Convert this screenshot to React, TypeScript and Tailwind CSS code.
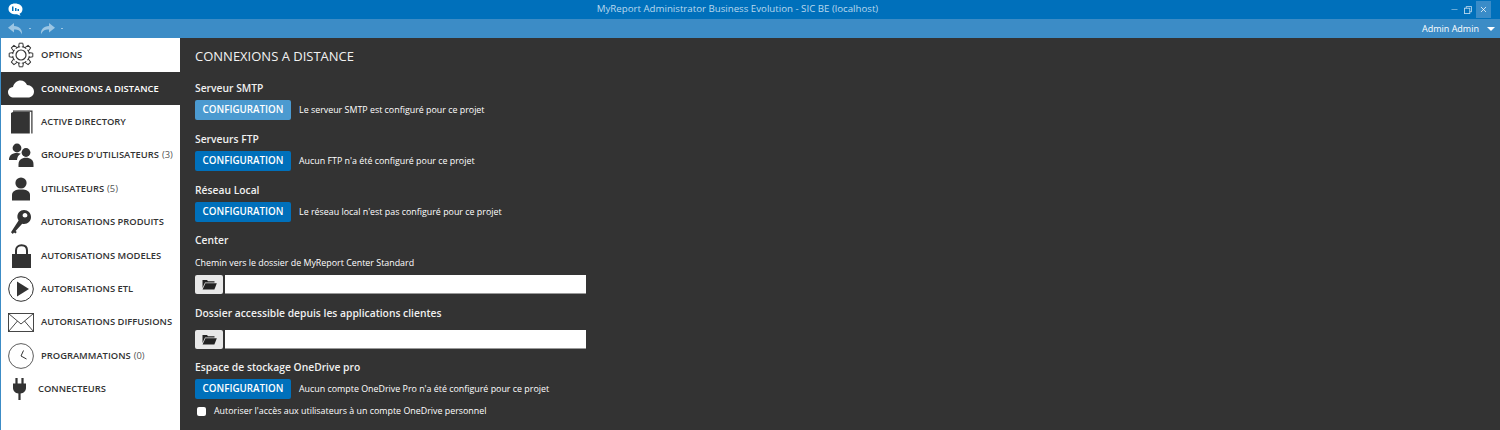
import { ReactNode } from 'react';
import { Minus, X } from 'lucide-react';

const font = "font-['Open_Sans','Noto_Sans',sans-serif]";

function GearIcon() {
  const teeth = [0, 45, 90, 135, 180, 225, 270, 315];
  return (
    <svg viewBox="0 0 26 26" className="w-[26px] h-[26px]" fill="none" stroke="#333" strokeWidth="1">
      {teeth.map((a) => (
        <path key={a} transform={`rotate(${a} 13 13)`} d="M10.6 5 L11.2 1.2 H14.8 L15.4 5" strokeLinejoin="round" />
      ))}
      {teeth.map((a) => (
        <path key={a} transform={`rotate(${a + 22.5} 13 13)`} d="M10.6 5 Q13 4.2 15.4 5" />
      ))}
      <circle cx="13" cy="13" r="5" strokeWidth="1.2" />
    </svg>
  );
}

function CloudIcon() {
  return (
    <svg viewBox="0 0 26 18" className="w-[26px] h-[18px]" fill="#fff">
      <path d="M6 17.5 C2.5 17.5 0 15.2 0 12.2 C0 9.4 2.2 7.2 5 7 C6 3 9 .5 12.5 .5 C15.5 .5 18 2.3 19 5 C23 5.2 26 8 26 11.5 C26 15 23.5 17.5 20 17.5 Z" />
    </svg>
  );
}

function BookIcon() {
  return (
    <svg viewBox="0 0 23 24" className="w-[23px] h-[24px]">
      <path d="M3 0.5 H22.5 V23.5 H21.3 V1.7 H3 Z" fill="#333" />
      <path d="M1 3 L3 2 H19.8 V23.5 H1 Z" fill="#333" />
    </svg>
  );
}

function GroupIcon() {
  return (
    <svg viewBox="0 0 25 24" className="w-[25px] h-[24px]" fill="#333">
      <circle cx="8" cy="5" r="4.4" />
      <path d="M0 17 C0 12.5 3 10 8 10 C9.5 10 10.8 10.3 11.8 10.8 C9 12.5 8.2 14.5 8 17 Z" />
      <circle cx="17" cy="9.5" r="4.4" />
      <path d="M9.5 24 V21.5 C9.5 17 12.5 14.8 17 14.8 C21.5 14.8 24.5 17 24.5 21.5 V24 Z" />
    </svg>
  );
}

function UserIcon() {
  return (
    <svg viewBox="0 0 18 24" className="w-[18px] h-[24px]" fill="#333">
      <circle cx="9" cy="6" r="5.6" />
      <path d="M0 23.5 V18 C0 14.5 3 12.5 9 12.5 C15 12.5 18 14.5 18 18 V23.5 Z" />
    </svg>
  );
}

function KeyIcon() {
  return (
    <svg viewBox="0 0 20 24" className="w-[20px] h-[24px]" fill="#333">
      <path fillRule="evenodd" d="M13 0 C17 0 20 3 20 7 C20 11 17 14 13 14 C12.4 14 11.8 13.9 11.2 13.7 L4.6 21 L5.8 22 L4.4 23.6 L3 22.4 L1.8 24 L0 22.3 L7.6 10.4 C7 9.4 6.4 8.2 6.4 7 C6.4 3 9 0 13 0 Z M14 3 C12.6 3 11.6 4 11.6 5.3 C11.6 6.6 12.6 7.6 14 7.6 C15.4 7.6 16.4 6.6 16.4 5.3 C16.4 4 15.4 3 14 3 Z" />
    </svg>
  );
}

function LockIcon() {
  return (
    <svg viewBox="0 0 19 24" className="w-[19px] h-[24px]">
      <path d="M4 11 V6.5 C4 3.2 6.2 1.2 9.5 1.2 C12.8 1.2 15 3.2 15 6.5 V11" fill="none" stroke="#333" strokeWidth="2" />
      <rect x="0" y="10" width="19" height="14" fill="#333" />
    </svg>
  );
}

function PlayIcon() {
  return (
    <svg viewBox="0 0 26 26" className="w-[26px] h-[26px]">
      <circle cx="13" cy="13" r="12.3" fill="none" stroke="#333" strokeWidth="1" />
      <path d="M9 5.5 L21 13 L9 20.5 Z" fill="#333" />
    </svg>
  );
}

function MailIcon() {
  return (
    <svg viewBox="0 0 26 19" className="w-[26px] h-[19px]" fill="none" stroke="#333" strokeWidth="0.9">
      <rect x="0.5" y="0.5" width="25" height="18" />
      <path d="M0.5 0.5 L13 11 L25.5 0.5 M0.5 18.5 L9.5 8 M25.5 18.5 L16.5 8" />
    </svg>
  );
}

function ClockIcon() {
  return (
    <svg viewBox="0 0 26 26" className="w-[26px] h-[26px]" fill="none" stroke="#333">
      <circle cx="13" cy="13" r="12.4" strokeWidth="0.8" />
      <path d="M15.5 7.5 L13 13 L18.5 16" strokeWidth="1" />
    </svg>
  );
}

function PlugIcon() {
  return (
    <svg viewBox="0 0 13 22" className="w-[13px] h-[22px]" fill="#333">
      <rect x="2.4" y="0" width="2.2" height="6" />
      <rect x="8.4" y="0" width="2.2" height="6" />
      <path d="M0 5.5 H13 V10 C13 13 10.5 15.2 7.6 15.6 V22 H5.4 V15.6 C2.5 15.2 0 13 0 10 Z" />
    </svg>
  );
}

function FolderIcon() {
  return (
    <svg viewBox="0 0 15 11" className="w-[15px] h-[11px]" fill="#222">
      <path d="M0.5 1 H5 L6 2.2 H12.5 V3.5 H3 L0.5 9 Z" />
      <path d="M3.4 4.3 H14.8 L12.4 10.6 H0.6 Z" />
    </svg>
  );
}

type NavItem = { icon: ReactNode; label: string; count?: string; active?: boolean };

const navItems: NavItem[] = [
  { icon: <GearIcon />, label: 'OPTIONS' },
  { icon: <CloudIcon />, label: 'CONNEXIONS A DISTANCE', active: true },
  { icon: <BookIcon />, label: 'ACTIVE DIRECTORY' },
  { icon: <GroupIcon />, label: "GROUPES D'UTILISATEURS", count: '(3)' },
  { icon: <UserIcon />, label: 'UTILISATEURS', count: '(5)' },
  { icon: <KeyIcon />, label: 'AUTORISATIONS PRODUITS' },
  { icon: <LockIcon />, label: 'AUTORISATIONS MODELES' },
  { icon: <PlayIcon />, label: 'AUTORISATIONS ETL' },
  { icon: <MailIcon />, label: 'AUTORISATIONS DIFFUSIONS' },
  { icon: <ClockIcon />, label: 'PROGRAMMATIONS', count: '(0)' },
];

function SidebarRow({ item }: { item: NavItem }) {
  return (
    <div
      className={`flex items-center h-[33.4px] ${item.active ? 'bg-[#333333] text-white' : 'text-[#333333]'}`}
    >
      <div className="w-[40px] flex items-center justify-center shrink-0">{item.icon}</div>
      <span className="text-[9.4px] font-semibold whitespace-nowrap">{item.label}</span>
      {item.count && <span className="text-[9.4px] ml-[3px] text-[#555]">{item.count}</span>}
    </div>
  );
}

function ConfigRow({ text, light }: { text: string; light?: boolean }) {
  return (
    <div className="flex items-center gap-2">
      <div
        className={`w-[96px] h-[20px] rounded-[2px] flex items-center justify-center text-[9.8px] font-semibold text-white ${light ? 'bg-[#4b9ad0]' : 'bg-[#0070bb]'}`}
      >
        CONFIGURATION
      </div>
      <span className="text-[8.9px] text-white">{text}</span>
    </div>
  );
}

function Heading({ children }: { children: ReactNode }) {
  return <div className="text-[10.3px] font-semibold text-[#f0f0f0] leading-[14px]">{children}</div>;
}

function PathField() {
  return (
    <div className="flex gap-[2px] w-[391px] h-[19px]">
      <div className="w-[28px] bg-[#e8e8e8] rounded-[2px] flex items-center justify-center">
        <FolderIcon />
      </div>
      <div className="flex-1 bg-white border-b border-[#999]" />
    </div>
  );
}

export default function App() {
  return (
    <div className={`w-[1500px] h-[430px] flex flex-col overflow-hidden bg-[#333333] ${font}`}>
      {/* title bar */}
      <div className="h-[19px] bg-[#0070bb] flex items-center shrink-0">
        <svg viewBox="0 0 15 13" className="w-[15px] h-[13px] ml-[8px]">
          <path d="M7 0.5 C11 0.5 14.5 2.6 14.5 6 C14.5 9 12.5 10.5 11.5 10.8 L12.5 12.8 L9 11.2 C4 11.6 .5 9.6 .5 6 C.5 2.6 3 .5 7 .5 Z" fill="#fff" />
          <rect x="4" y="3.5" width="1.5" height="4.5" fill="#0070bb" />
          <rect x="7" y="5" width="1.5" height="3" fill="#0070bb" />
          <rect x="9.5" y="6" width="1.5" height="2" fill="#0070bb" />
        </svg>
        <div className="flex-1 text-center text-[9.7px] text-[#b9d8ee] pl-[2px]">
          MyReport Administrator Business Evolution - SIC BE (localhost)
        </div>
        <div className="flex items-center h-full text-[#b9d8ee] pr-[9px]">
          <Minus size={9} strokeWidth={1.5} className="mr-[5px]" />
          <svg viewBox="0 0 9 9" className="w-[8px] h-[8px] mr-[3px]" fill="none" stroke="currentColor">
            <rect x="0.5" y="2.5" width="6" height="6" />
            <path d="M2.5 2.5 V0.5 H8.5 V6.5 H6.5" />
          </svg>
          <div className="w-[15px] h-[17px] ml-[1px] bg-[#3a8cc8] flex items-center justify-center text-white">
            <X size={9} strokeWidth={2} />
          </div>
        </div>
      </div>

      {/* quick access toolbar */}
      <div className="h-[19px] bg-[#3c8cc6] flex items-center shrink-0 text-[#9cc6e4]">
        <svg viewBox="0 0 15 12" className="w-[15px] h-[12px] ml-[8px]" fill="currentColor">
          <path d="M6 0 L0 4.8 L6 9.5 V6.5 C9.5 6.3 12.5 7.5 14 11.5 C14.5 6.5 11.5 3.2 6 3 Z" />
        </svg>
        <div className="w-[2px] h-[1px] bg-current ml-[6px]" />
        <svg viewBox="0 0 15 12" className="w-[15px] h-[12px] ml-[9px]" fill="currentColor">
          <path d="M9 0 L15 4.8 L9 9.5 V6.5 C5.5 6.3 2.5 7.5 1 11.5 C.5 6.5 3.5 3.2 9 3 Z" />
        </svg>
        <div className="w-[2px] h-[1px] bg-current ml-[6px]" />
        <div className="flex-1" />
        <span className="text-[9px] text-white mr-[8px]">Admin Admin</span>
        <div className="w-0 h-0 border-x-[4px] border-x-transparent border-t-[4px] border-t-white mr-[5px]" />
      </div>

      <div className="flex flex-1 min-h-0">
        {/* sidebar */}
        <div className="w-[180px] shrink-0 bg-white border-l border-[#3c8cc6] pt-[0.6px]">
          {navItems.map((item) => (
            <SidebarRow key={item.label} item={item} />
          ))}
          <div className="flex items-center h-[33.4px] text-[#333333]">
            <div className="w-[37px] flex items-center justify-center shrink-0">
              <PlugIcon />
            </div>
            <span className="text-[9.4px] font-semibold">CONNECTEURS</span>
          </div>
        </div>

        {/* main panel */}
        <div className="flex-1 pl-[15px] text-white">
          <div className="text-[13px] leading-[18px] mt-[9px] text-[#f2f2f2]">CONNEXIONS A DISTANCE</div>
          <div className="mt-[16px]">
            <Heading>Serveur SMTP</Heading>
            <div className="mt-[5px]">
              <ConfigRow light text="Le serveur SMTP est configuré pour ce projet" />
            </div>
          </div>
          <div className="mt-[12px]">
            <Heading>Serveurs FTP</Heading>
            <div className="mt-[5px]">
              <ConfigRow text="Aucun FTP n'a été configuré pour ce projet" />
            </div>
          </div>
          <div className="mt-[12px]">
            <Heading>Réseau Local</Heading>
            <div className="mt-[5px]">
              <ConfigRow text="Le réseau local n'est pas configuré pour ce projet" />
            </div>
          </div>
          <div className="mt-[11px]">
            <Heading>Center</Heading>
            <div className="text-[8.9px] leading-[14px] mt-[9px]">Chemin vers le dossier de MyReport Center Standard</div>
            <div className="mt-[5px]">
              <PathField />
            </div>
          </div>
          <div className="mt-[12px]">
            <Heading>Dossier accessible depuis les applications clientes</Heading>
            <div className="mt-[10px]">
              <PathField />
            </div>
          </div>
          <div className="mt-[11px]">
            <Heading>Espace de stockage OneDrive pro</Heading>
            <div className="mt-[5px]">
              <ConfigRow text="Aucun compte OneDrive Pro n'a été configuré pour ce projet" />
            </div>
            <label className="flex items-center mt-[5px] leading-[14px]">
              <span className="w-[9px] h-[9px] bg-white rounded-[2px] ml-[2px]" />
              <span className="text-[8.9px] ml-[8px]">Autoriser l'accès aux utilisateurs à un compte OneDrive personnel</span>
            </label>
          </div>
        </div>
      </div>
    </div>
  );
}
